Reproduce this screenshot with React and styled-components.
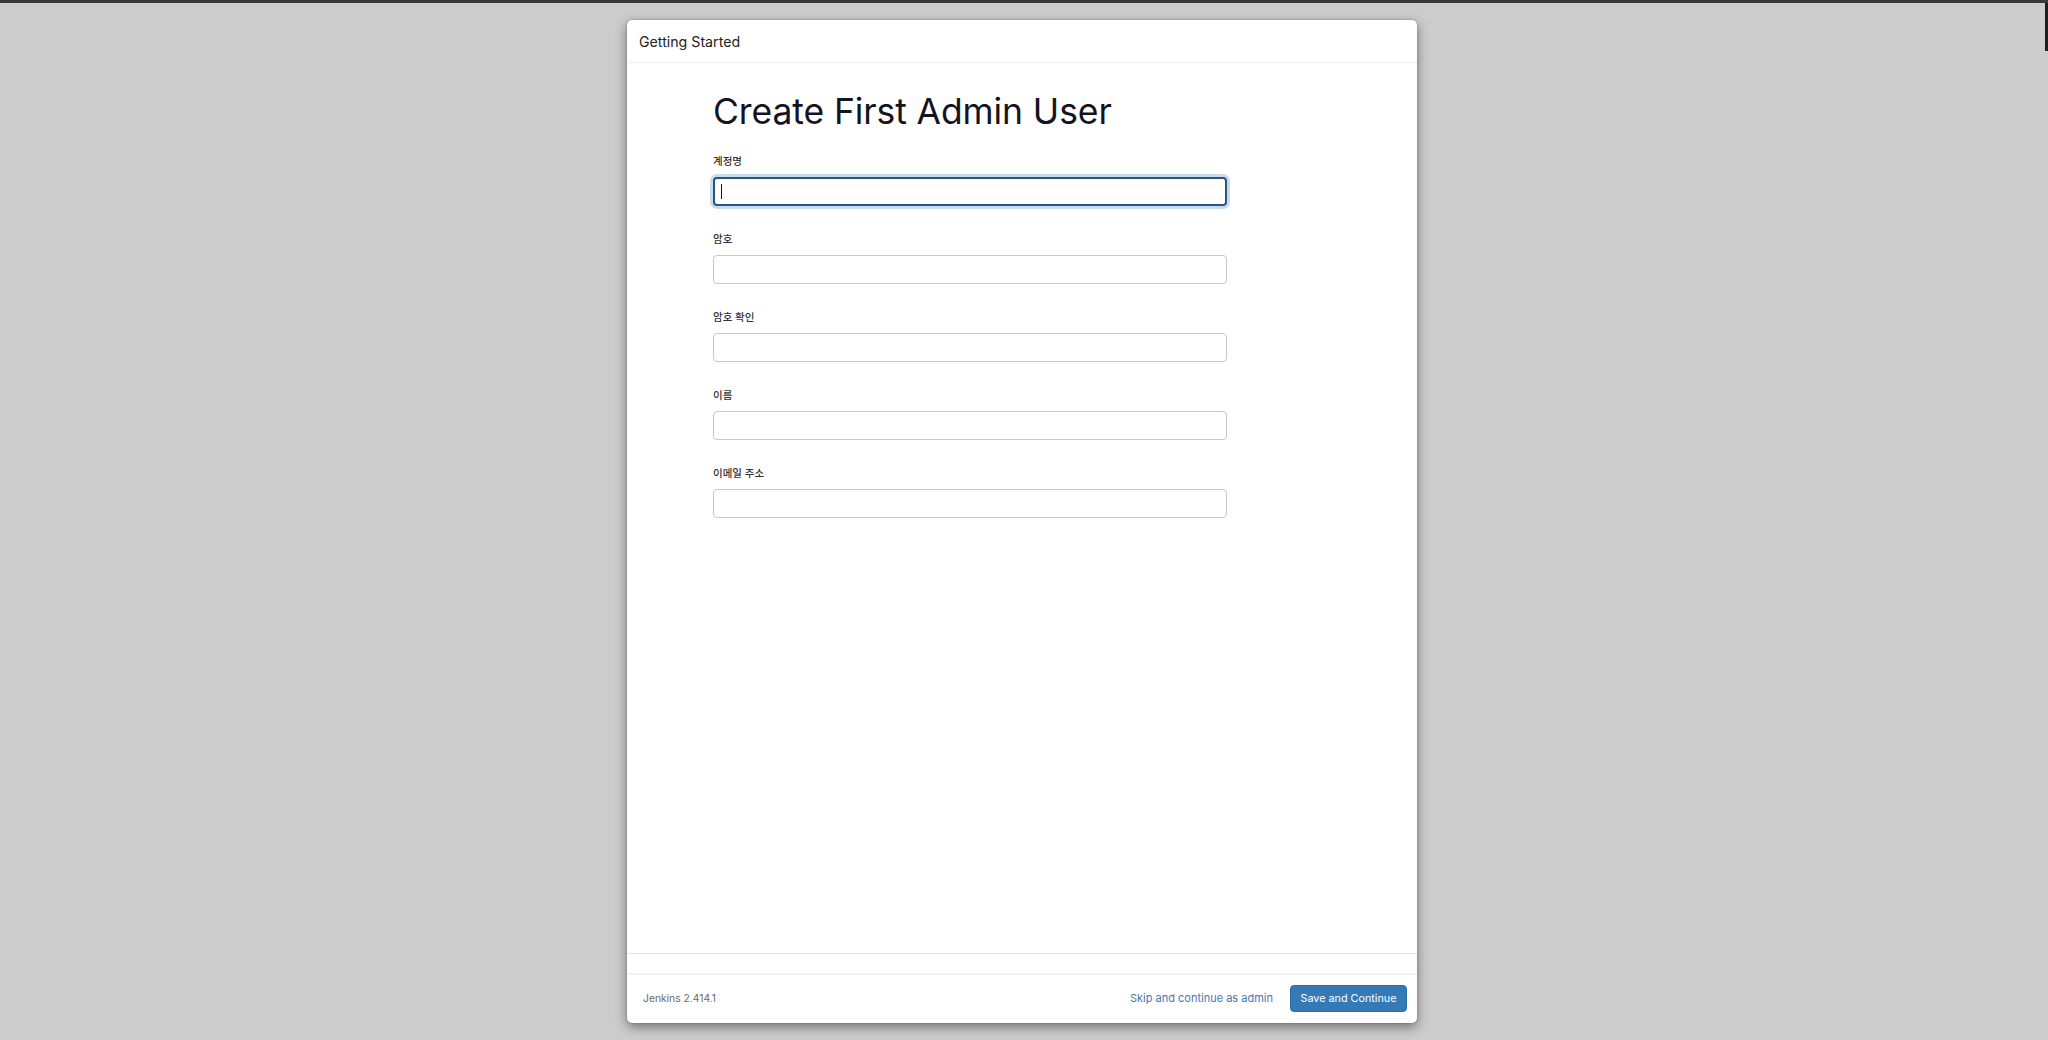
import styled, { createGlobalStyle } from 'styled-components';

const GlobalStyle = createGlobalStyle`
  html, body {
    margin: 0;
    padding: 0;
    background: #cccccc;
    font-family: Inter, 'Noto Sans', 'Noto Sans CJK KR', sans-serif;
  }
  * {
    box-sizing: border-box;
  }
`;

const Page = styled.div`
  position: relative;
  height: 1040px;
  overflow: hidden;
  background: #cccccc;
`;

const TopBar = styled.div`
  height: 3px;
  background: #38383d;
`;

const ScrollThumb = styled.div`
  position: absolute;
  top: 3px;
  right: 0;
  width: 3px;
  height: 48px;
  background: #1d1d22;
`;

const Stage = styled.div`
  display: flex;
  justify-content: center;
  padding: 17px 4px 0 0;
`;

const Dialog = styled.div`
  width: 790px;
  height: 1003px;
  display: flex;
  flex-direction: column;
  background: #fff;
  border-radius: 5px;
  box-shadow: 0 4px 12px rgba(0, 0, 0, 0.45), 0 0 2px rgba(0, 0, 0, 0.3);
  overflow: hidden;
`;

const Header = styled.header`
  height: 43px;
  display: flex;
  align-items: center;
  padding: 0 12px;
  border-bottom: 1px solid #f0f0f0;
  font-size: 14.2px;
  color: #222;
`;

const Body = styled.section`
  flex: 1;
  padding: 27px 0 0 86px;
`;

const Title = styled.h1`
  margin: 0 0 21px;
  font-size: 35.5px;
  line-height: 43px;
  font-weight: 400;
  color: #14141f;
  letter-spacing: -0.1px;
`;

const Form = styled.form`
  width: 514px;
  display: flex;
  flex-direction: column;
`;

const Field = styled.div`
  display: flex;
  flex-direction: column;
  margin-bottom: 26px;
`;

const Label = styled.label`
  font-family: Inter, 'Noto Sans CJK KR', sans-serif;
  font-size: 10.5px;
  line-height: 16px;
  font-weight: 500;
  color: #333;
  margin-bottom: 7px;
`;

const InputWrap = styled.div`
  position: relative;
`;

const Caret = styled.span`
  position: absolute;
  left: 8px;
  top: 7px;
  width: 1px;
  height: 15px;
  background: #14141f;
  pointer-events: none;
`;

const Input = styled.input`
  display: block;
  height: 29px;
  width: 100%;
  padding: 0 6px;
  font-family: Inter, sans-serif;
  font-size: 13px;
  color: #14141f;
  background: #fff;
  border-radius: 4px;
  outline: none;
  border: ${p => (p.$active ? '2px solid #275682' : '1px solid #c8c8c8')};
  box-shadow: ${p => (p.$active ? '0 0 0 3px #c9dbeb' : 'none')};
  caret-color: transparent;
`;

const BodyEnd = styled.div`
  height: 20px;
  border-top: 1px solid #e4e4e4;
`;

const Footer = styled.footer`
  height: 50px;
  display: flex;
  align-items: center;
  padding: 0 10px 2px 16px;
  border-top: 2px solid #f2f2f2;
`;

const Version = styled.span`
  flex: 1;
  font-size: 10.3px;
  color: #6a6a6a;
`;

const SkipLink = styled.a`
  font-size: 11px;
  color: #4479b0;
  text-decoration: none;
  margin-right: 17px;
  cursor: pointer;
`;

const PrimaryButton = styled.button`
  height: 27px;
  width: 117px;
  padding: 0;
  font-family: Inter, sans-serif;
  font-size: 10.8px;
  color: #fff;
  background: #337ab7;
  border: 1px solid #2e6da4;
  border-radius: 4px;
  cursor: pointer;
`;

const fields = [
  { name: 'username', label: '계정명', type: 'text' },
  { name: 'password1', label: '암호', type: 'password' },
  { name: 'password2', label: '암호 확인', type: 'password' },
  { name: 'fullname', label: '이름', type: 'text' },
  { name: 'email', label: '이메일 주소', type: 'email' }
];

export default function App() {
  return (
    <Page>
      <GlobalStyle />
      <TopBar />
      <ScrollThumb />
      <Stage>
        <Dialog>
          <Header>Getting Started</Header>
          <Body>
            <Title>Create First Admin User</Title>
            <Form onSubmit={e => e.preventDefault()}>
              {fields.map((f, i) => (
                <Field key={f.name}>
                  <Label htmlFor={f.name}>{f.label}</Label>
                  <InputWrap>
                    <Input
                      id={f.name}
                      name={f.name}
                      type={f.type}
                      $active={i === 0}
                    />
                    {i === 0 && <Caret />}
                  </InputWrap>
                </Field>
              ))}
            </Form>
          </Body>
          <BodyEnd />
          <Footer>
            <Version>Jenkins 2.414.1</Version>
            <SkipLink>Skip and continue as admin</SkipLink>
            <PrimaryButton type='button'>Save and Continue</PrimaryButton>
          </Footer>
        </Dialog>
      </Stage>
    </Page>
  );
}
